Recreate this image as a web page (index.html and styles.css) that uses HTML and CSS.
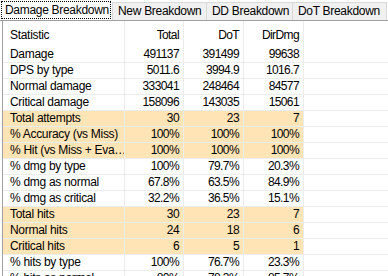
FILE: index.html
```html
<!DOCTYPE html>
<html>
<head>
<meta charset="utf-8">
<link rel="stylesheet" href="styles.css">
</head>
<body>
<div class="tabs">
  <div class="tab active"><span class="focus">Damage Breakdown</span></div>
  <div class="tab">New Breakdown</div>
  <div class="tab">DD Breakdown</div>
  <div class="tab">DoT Breakdown</div>
</div>
<div class="panel">
  <div class="row head"><div class="c name">Statistic</div><div class="c num">Total</div><div class="c num">DoT</div><div class="c num">DirDmg</div><div class="c rest"></div></div>
  <div class="row"><div class="c name">Damage</div><div class="c num">491137</div><div class="c num">391499</div><div class="c num">99638</div><div class="c rest"></div></div>
  <div class="row"><div class="c name">DPS by type</div><div class="c num">5011.6</div><div class="c num">3994.9</div><div class="c num">1016.7</div><div class="c rest"></div></div>
  <div class="row"><div class="c name">Normal damage</div><div class="c num">333041</div><div class="c num">248464</div><div class="c num">84577</div><div class="c rest"></div></div>
  <div class="row"><div class="c name">Critical damage</div><div class="c num">158096</div><div class="c num">143035</div><div class="c num">15061</div><div class="c rest"></div></div>
  <div class="row hl"><div class="c name">Total attempts</div><div class="c num">30</div><div class="c num">23</div><div class="c num">7</div><div class="c rest"></div></div>
  <div class="row hl"><div class="c name">% Accuracy (vs Miss)</div><div class="c num">100%</div><div class="c num">100%</div><div class="c num">100%</div><div class="c rest"></div></div>
  <div class="row hl"><div class="c name">% Hit (vs Miss + Eva…</div><div class="c num">100%</div><div class="c num">100%</div><div class="c num">100%</div><div class="c rest"></div></div>
  <div class="row"><div class="c name">% dmg by type</div><div class="c num">100%</div><div class="c num">79.7%</div><div class="c num">20.3%</div><div class="c rest"></div></div>
  <div class="row"><div class="c name">% dmg as normal</div><div class="c num">67.8%</div><div class="c num">63.5%</div><div class="c num">84.9%</div><div class="c rest"></div></div>
  <div class="row"><div class="c name">% dmg as critical</div><div class="c num">32.2%</div><div class="c num">36.5%</div><div class="c num">15.1%</div><div class="c rest"></div></div>
  <div class="row hl"><div class="c name">Total hits</div><div class="c num">30</div><div class="c num">23</div><div class="c num">7</div><div class="c rest"></div></div>
  <div class="row hl"><div class="c name">Normal hits</div><div class="c num">24</div><div class="c num">18</div><div class="c num">6</div><div class="c rest"></div></div>
  <div class="row hl"><div class="c name">Critical hits</div><div class="c num">6</div><div class="c num">5</div><div class="c num">1</div><div class="c rest"></div></div>
  <div class="row"><div class="c name">% hits by type</div><div class="c num">100%</div><div class="c num">76.7%</div><div class="c num">23.3%</div><div class="c rest"></div></div>
  <div class="row"><div class="c name">% hits as normal</div><div class="c num">80%</div><div class="c num">78.3%</div><div class="c num">85.7%</div><div class="c rest"></div></div>
</div>
</body>
</html>
```
FILE: styles.css
```css
html, body {
  margin: 0;
  padding: 0;
}
body {
  width: 388px;
  height: 276px;
  overflow: hidden;
  background: #fff;
  color: #000;
  font-family: "Liberation Sans", Arial, sans-serif;
  font-size: 12px;
}
.tabs {
  display: grid;
  grid-template-columns: 111px 95px 86px 94px;
  column-gap: 0;
  align-items: end;
  height: 20px;
  padding-left: 1px;
  border-bottom: 1px solid #a0a0a0;
}
.tab {
  box-sizing: border-box;
  height: 18px;
  line-height: 16px;
  padding-left: 5px;
  background: #f0f0f0;
  border: 1px solid #d9d9d9;
  border-bottom: none;
  white-space: nowrap;
  overflow: hidden;
  letter-spacing: -0.3px;
}
.tab.active {
  height: 20px;
  padding: 1px 0 0 0;
  background: #fff;
  border: none;
  margin-right: 1px;
}
.focus {
  display: block;
  box-sizing: border-box;
  height: 18px;
  line-height: 16px;
  padding-left: 3px;
  border: 1px dotted #000;
}
.tab + .tab {
  border-left: none;
}
.tab.active + .tab {
  border-left: 1px solid #d9d9d9;
}
.panel {
  margin-left: 2px;
  border-left: 1px solid #a0a0a0;
}
.row {
  display: grid;
  grid-template-columns: 122px 59px 60px 60px 1fr;
  height: 16px;
}
.row.head {
  height: 26px;
}
.c {
  box-sizing: border-box;
  border-bottom: 1px solid #ececec;
  border-right: 1px solid #ececec;
  line-height: 15px;
  white-space: nowrap;
  overflow: hidden;
}
.head .c {
  border-bottom: none;
  line-height: 16px;
  padding-top: 6px;
}
.name {
  padding-left: 7px;
  letter-spacing: -0.3px;
}
.num {
  text-align: right;
  padding-right: 4px;
  letter-spacing: -0.6px;
}
.rest {
  border-right: none;
}
.hl .name, .hl .num {
  background: #ffe4b5;
}
```
